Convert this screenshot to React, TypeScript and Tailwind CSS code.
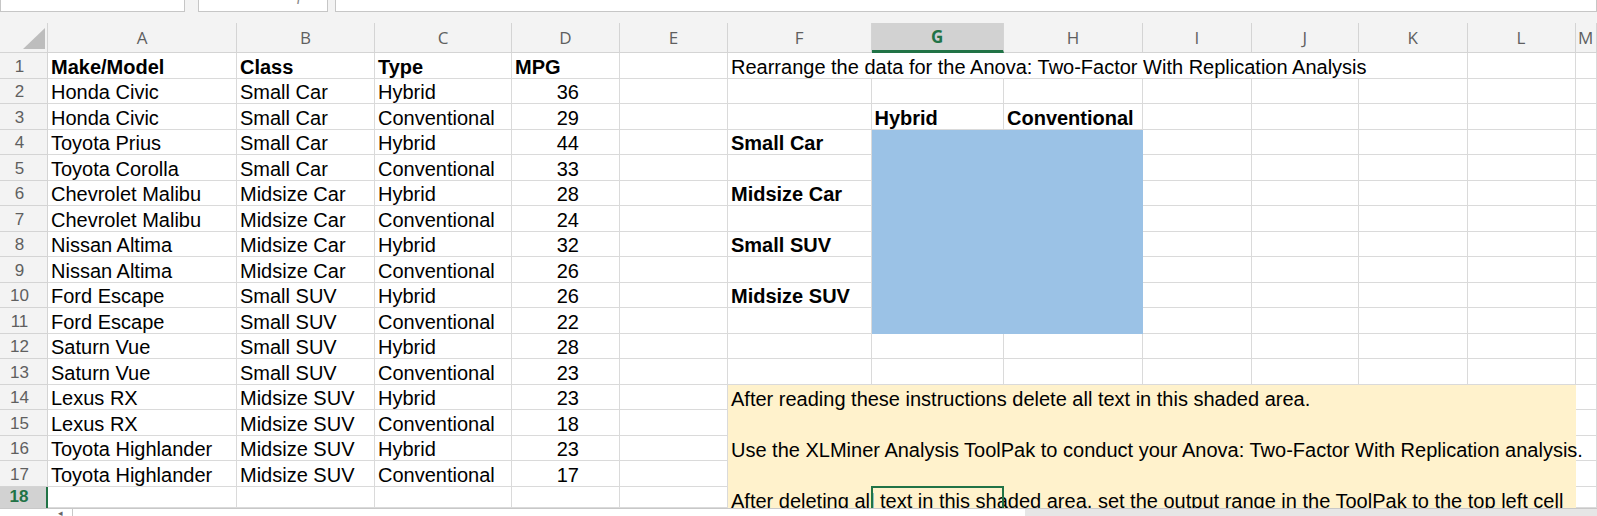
import React from 'react';

const COLS = ['A', 'B', 'C', 'D', 'E', 'F', 'G', 'H', 'I', 'J', 'K', 'L', 'M'];

type Cell = { v: string; bold?: boolean; right?: boolean };

const data: Record<string, Cell> = {};

const cars: [string, string, string, number][] = [
  ['Honda Civic', 'Small Car', 'Hybrid', 36],
  ['Honda Civic', 'Small Car', 'Conventional', 29],
  ['Toyota Prius', 'Small Car', 'Hybrid', 44],
  ['Toyota Corolla', 'Small Car', 'Conventional', 33],
  ['Chevrolet Malibu', 'Midsize Car', 'Hybrid', 28],
  ['Chevrolet Malibu', 'Midsize Car', 'Conventional', 24],
  ['Nissan Altima', 'Midsize Car', 'Hybrid', 32],
  ['Nissan Altima', 'Midsize Car', 'Conventional', 26],
  ['Ford Escape', 'Small SUV', 'Hybrid', 26],
  ['Ford Escape', 'Small SUV', 'Conventional', 22],
  ['Saturn Vue', 'Small SUV', 'Hybrid', 28],
  ['Saturn Vue', 'Small SUV', 'Conventional', 23],
  ['Lexus RX', 'Midsize SUV', 'Hybrid', 23],
  ['Lexus RX', 'Midsize SUV', 'Conventional', 18],
  ['Toyota Highlander', 'Midsize SUV', 'Hybrid', 23],
  ['Toyota Highlander', 'Midsize SUV', 'Conventional', 17],
];

data.A1 = { v: 'Make/Model', bold: true };
data.B1 = { v: 'Class', bold: true };
data.C1 = { v: 'Type', bold: true };
data.D1 = { v: 'MPG', bold: true };
cars.forEach((c, i) => {
  const r = i + 2;
  data['A' + r] = { v: c[0] };
  data['B' + r] = { v: c[1] };
  data['C' + r] = { v: c[2] };
  data['D' + r] = { v: String(c[3]), right: true };
});
data.G3 = { v: 'Hybrid', bold: true };
data.H3 = { v: 'Conventional', bold: true };
data.F4 = { v: 'Small Car', bold: true };
data.F6 = { v: 'Midsize Car', bold: true };
data.F8 = { v: 'Small SUV', bold: true };
data.F10 = { v: 'Midsize SUV', bold: true };

// cells hidden under merged / filled blocks
function covered(col: string, row: number) {
  const c = COLS.indexOf(col);
  if (row === 1 && c >= 5 && c <= 10) return true; // F1 title spills over F..K
  if (row >= 4 && row <= 11 && (col === 'G' || col === 'H')) return true;
  if (row >= 14 && c >= 5 && c <= 11) return true;
  return false;
}

const yellowLines = [
  'After reading these instructions delete all text in this shaded area.',
  '',
  'Use the XLMiner Analysis ToolPak to conduct your Anova: Two-Factor With Replication analysis.',
  '',
  'After deleting all text in this shaded area, set the output range in the ToolPak to the top left cell',
];

export default function App() {
  const rows = Array.from({ length: 18 }, (_, i) => i + 1);

  return (
    <div className="w-[1597px] h-[516px] overflow-hidden bg-white flex flex-col font-['Liberation_Sans',Arial,sans-serif] text-black">
      {/* name box + formula bar, only bottom edge visible */}
      <div className="h-[12px] flex items-end overflow-hidden bg-[#f3f3f3] shrink-0">
        <div className="w-[185px] h-[30px] shrink-0 bg-white border border-[#c6c6c6] flex items-end pl-[8px] pb-[9px]">
          <span className="text-[17px] leading-none text-[#333]">G18</span>
        </div>
        <div className="w-[130px] h-[30px] ml-[13px] shrink-0 bg-white border border-[#c6c6c6] flex items-end pb-[8px] text-[#888]">
          <span className="ml-[14px] text-[16px] leading-none">✕</span>
          <span className="ml-[28px] text-[16px] leading-none">✓</span>
          <span className="ml-[30px] text-[16px] leading-none italic font-['Liberation_Serif',serif]">fx</span>
        </div>
        <div className="flex-1 h-[30px] ml-[7px] bg-white border border-[#c6c6c6]" />
      </div>
      <div className="h-[11px] bg-[#f3f3f3] shrink-0" />

      {/* sheet grid */}
      <div className="relative overflow-hidden shrink-0 grid grid-cols-[48px_189px_138px_137px_108px_108px_143.5px_132.5px_139px_108.5px_107.5px_108.5px_108px_1fr] grid-rows-[30px_repeat(17,25.53px)_21px] text-[20px]">
        {/* select-all corner */}
        <div className="bg-[#f3f3f3] border-r border-b border-[#d4d4d4] relative">
          <svg className="absolute left-[23px] top-[5px]" width="22" height="21" viewBox="0 0 22 21">
            <polygon points="22,0 22,21 0,21" fill="#bdbdbd" />
          </svg>
        </div>
        {COLS.map((c) =>
          c === 'G' ? (
            <div
              key={c}
              className="bg-[#d2d2d2] border-r border-[#d4d4d4] border-b-[3px] border-b-[#217346] flex items-center justify-center text-[17px] font-bold text-[#217346] font-['Open_Sans',sans-serif]"
            >
              {c}
            </div>
          ) : (
            <div
              key={c}
              className="bg-[#f3f3f3] border-r border-b border-[#d4d4d4] flex items-center justify-center text-[17px] text-[#5f5f5f] font-['Open_Sans',sans-serif]"
            >
              {c}
            </div>
          )
        )}

        {rows.map((r) => (
          <React.Fragment key={r}>
            {r === 18 ? (
              <div className="bg-[#d2d2d2] border-r-[2px] border-r-[#217346] flex items-end justify-center pr-[8px] text-[17px] leading-[22px] font-bold text-[#217346]">
                {r}
              </div>
            ) : (
              <div className="bg-[#f3f3f3] border-r border-b border-[#d4d4d4] flex items-end justify-center pr-[8px] text-[17px] leading-[22px] text-[#5f5f5f]">
                {r}
              </div>
            )}
            {COLS.map((c) => {
              if (covered(c, r)) return null;
              const cell = data[c + r];
              return (
                <div
                  key={c + r}
                  className={
                    'border-r border-b border-[#dadada] flex items-end leading-[22px] whitespace-nowrap px-[3px] ' +
                    (cell?.right ? 'justify-end pr-[40px] ' : '') +
                    (cell?.bold ? 'font-bold' : '')
                  }
                >
                  {cell?.v}
                </div>
              );
            })}
          </React.Fragment>
        ))}

        {/* title spilling from F1 */}
        <div className="col-start-7 col-span-6 row-start-2 border-r border-b border-[#dadada] flex items-end leading-[22px] whitespace-nowrap px-[3px]">
          Rearrange the data for the Anova: Two-Factor With Replication Analysis
        </div>

        {/* blue input block G4:H11 */}
        <div className="col-start-8 col-span-2 row-start-5 row-span-8 bg-[#9bc2e6]" />

        {/* yellow instruction block F14:L18, text may spill into M */}
        <div className="col-start-7 col-span-7 row-start-15 row-span-5 bg-[#fff2cc] flex flex-col">
          {yellowLines.map((t, i) => (
            <div key={i} className="h-[25.53px] shrink-0 flex items-end leading-[22px] whitespace-nowrap px-[3px]">
              {t}
            </div>
          ))}
        </div>

        {/* active cell G18 */}
        <div className="col-start-8 row-start-19 self-start h-[28px] -ml-[1px] -mt-[1px] border-2 border-[#217346] z-10" />
      </div>

      {/* sheet tabs / horizontal scrollbar strip */}
      <div className="flex-1 flex border-t border-[#c8c8c8] bg-white relative z-20">
        <div className="w-[48px] shrink-0" />
        <div className="w-[977px] shrink-0 flex">
          <div className="w-[25px] border-r border-[#c8c8c8] flex justify-center text-[9px] leading-none text-[#666]">◂</div>
        </div>
        <div className="flex-1 bg-[#e6e6e6]" />
      </div>
    </div>
  );
}
